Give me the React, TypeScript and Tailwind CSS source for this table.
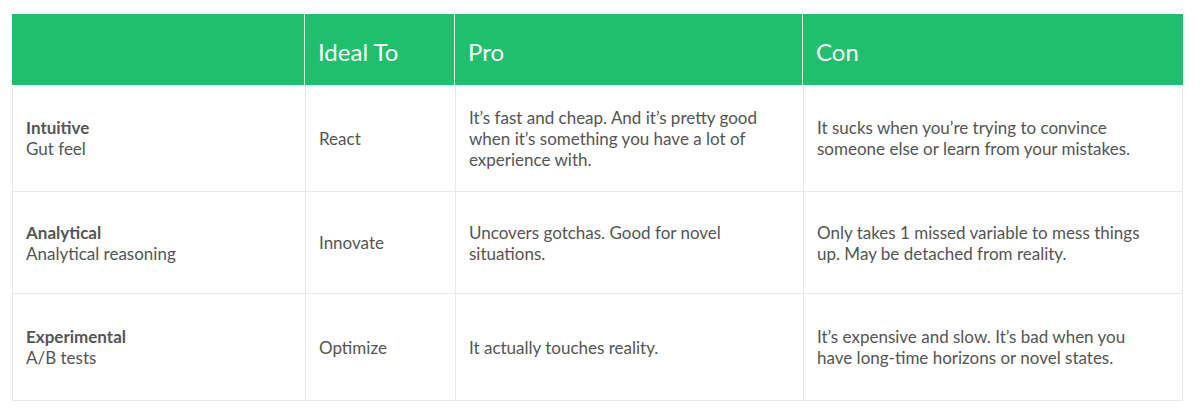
const ROWS = [
  {
    title: "Intuitive",
    sub: "Gut feel",
    ideal: "React",
    pro: "It’s fast and cheap. And it’s pretty good when it’s something you have a lot of experience with.",
    con: "It sucks when you’re trying to convince someone else or learn from your mistakes.",
    h: "h-[107px]",
  },
  {
    title: "Analytical",
    sub: "Analytical reasoning",
    ideal: "Innovate",
    pro: "Uncovers gotchas. Good for novel situations.",
    con: "Only takes 1 missed variable to mess things up. May be detached from reality.",
    h: "h-[102px]",
  },
  {
    title: "Experimental",
    sub: "A/B tests",
    ideal: "Optimize",
    pro: "It actually touches reality.",
    con: "It’s expensive and slow. It’s bad when you have long-time horizons or novel states.",
    h: "h-[106px]",
  },
];

const COLS = "grid grid-cols-[293px_150px_348px_380px]";

export default function App() {
  return (
    <div className="w-[1200px] h-[414px] bg-white pl-3 pt-[14px] font-['Lato',sans-serif]">
      <div className="w-[1171px] border-b border-[#e9e9e9]">
        {/* Header */}
        <div className={`${COLS} h-[71px] bg-[#20bf6d] text-white text-[24px] leading-none`}>
          <div className="border-r border-[#e4f6ec]" />
          <div className="flex items-center px-[13px] pt-1 border-r border-[#e4f6ec]">Ideal To</div>
          <div className="flex items-center px-[13px] pt-1 border-r border-[#e4f6ec]">Pro</div>
          <div className="flex items-center px-[13px] pt-1">Con</div>
        </div>

        {/* Body */}
        {ROWS.map((r, i) => (
          <div
            key={r.title}
            className={`${COLS} ${r.h} text-[17px] leading-[21px] text-[#555] border-l border-r border-[#e9e9e9] ${i < ROWS.length - 1 ? "border-b" : ""}`}
          >
            <div className="flex flex-col justify-center px-[13px] border-r border-[#e9e9e9]">
              <span className="font-bold">{r.title}</span>
              <span>{r.sub}</span>
            </div>
            <div className="flex items-center px-[13px] border-r border-[#e9e9e9]">{r.ideal}</div>
            <div className="flex items-center px-[13px] pr-8 border-r border-[#e9e9e9]">{r.pro}</div>
            <div className="flex items-center px-[13px] pr-8">{r.con}</div>
          </div>
        ))}
      </div>
    </div>
  );
}
